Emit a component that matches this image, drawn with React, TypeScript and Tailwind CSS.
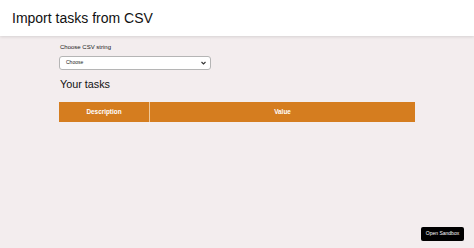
import React from "react";

export default function App() {
  return (
    <div className="w-[474px] h-[248px] bg-[#f3edee] relative overflow-hidden" style={{ fontFamily: "'Liberation Sans', Arial, sans-serif" }}>
      <header className="h-[36px] bg-white flex items-center pl-[12px] shadow-[0_1px_3px_rgba(0,0,0,0.12)]">
        <h1 className="text-[14px] leading-none text-[#111] font-normal">Import tasks from CSV</h1>
      </header>
      <div className="pl-[59px] pt-[7px] w-[415px]">
        <div className="text-[6px] text-[#222] leading-[8px] pl-[1px]">Choose CSV string</div>
        <div className="mt-[5px] w-[152px] h-[14px] bg-white border border-[#b5b5b5] rounded-[3px] flex items-center justify-between pl-[6px] pr-[4px]">
          <span className="text-[5px] text-[#222]">Choose</span>
          <svg width="5" height="4" viewBox="0 0 6 4"><path d="M0.6 0.8 L3 3.2 L5.4 0.8" stroke="#333" strokeWidth="1.3" fill="none" /></svg>
        </div>
        <h2 className="mt-[8px] text-[10.8px] leading-[13px] text-[#111] pl-[1px]">Your tasks</h2>
        <div className="mt-[11px] flex h-[20px] bg-[#d57d1f] text-white text-[6.4px] font-bold">
          <div className="w-[91px] flex items-center justify-center border-r border-[#f0c99a]">Description</div>
          <div className="flex-1 flex items-center justify-center">Value</div>
        </div>
      </div>
      <button className="absolute left-[421px] top-[227px] w-[43px] h-[14px] bg-black text-white text-[5px] rounded-[2px] flex items-center justify-center">Open Sandbox</button>
    </div>
  );
}
